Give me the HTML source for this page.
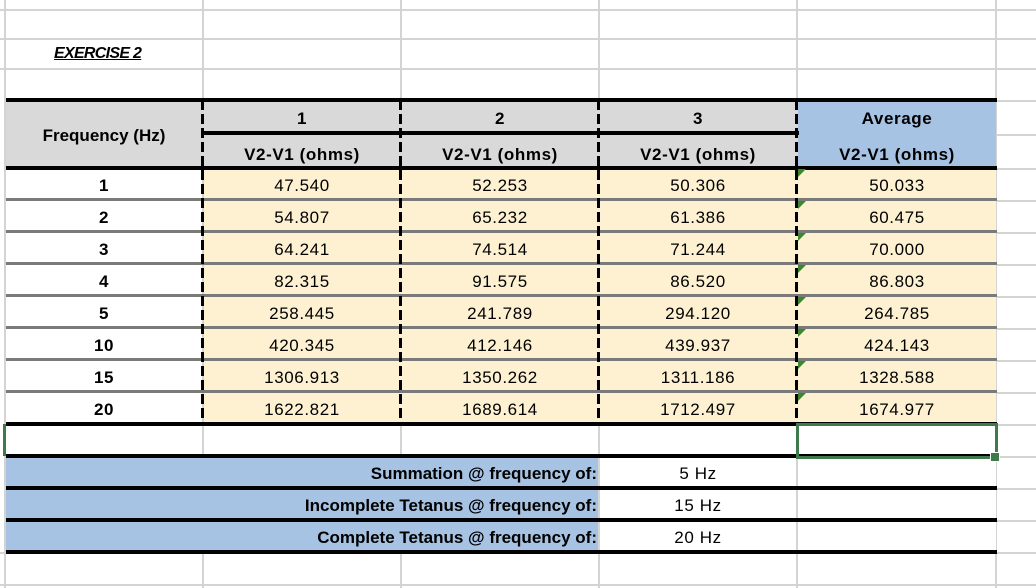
<!DOCTYPE html>
<html><head><style>
body{margin:0;width:1036px;height:588px;overflow:hidden;background:#fff;font-family:"Liberation Sans",sans-serif;position:relative}
div{position:absolute;box-sizing:border-box}
.g{background:#d4d4d4}
.t{text-align:center;font-size:17px;line-height:32px;color:#000;letter-spacing:0.6px}
.b{font-weight:bold}
.hl{background:#7a7a7a;height:3px}
.bl{background:#000;height:4px}
.dash{width:3px;background:repeating-linear-gradient(#000 0 10px,transparent 10px 14px)}
.tri{width:0;height:0;border-top:8px solid #3a8a2a;border-right:8px solid transparent}
</style></head><body>
<div class="g" style="left:0;top:9px;width:1036px;height:2px"></div>
<div class="g" style="left:0;top:38px;width:1036px;height:2px"></div>
<div class="g" style="left:0;top:68px;width:1036px;height:2px"></div>
<div class="g" style="left:0;top:552px;width:1036px;height:2px"></div>
<div class="g" style="left:0;top:584px;width:1036px;height:2px"></div>
<div class="g" style="left:996px;top:456px;width:40px;height:2px"></div>
<div class="g" style="left:4px;top:0;width:2px;height:588px"></div>
<div class="g" style="left:202px;top:0;width:2px;height:588px"></div>
<div class="g" style="left:400px;top:0;width:2px;height:588px"></div>
<div class="g" style="left:598px;top:0;width:2px;height:588px"></div>
<div class="g" style="left:796px;top:0;width:2px;height:588px"></div>
<div class="g" style="left:995px;top:0;width:2px;height:588px"></div>
<div class="g" style="left:997px;top:100px;width:39px;height:2px"></div>
<div class="g" style="left:997px;top:134px;width:39px;height:2px"></div>
<div class="g" style="left:997px;top:168px;width:39px;height:2px"></div>
<div class="g" style="left:997px;top:200px;width:39px;height:2px"></div>
<div class="g" style="left:997px;top:232px;width:39px;height:2px"></div>
<div class="g" style="left:997px;top:264px;width:39px;height:2px"></div>
<div class="g" style="left:997px;top:296px;width:39px;height:2px"></div>
<div class="g" style="left:997px;top:328px;width:39px;height:2px"></div>
<div class="g" style="left:997px;top:360px;width:39px;height:2px"></div>
<div class="g" style="left:997px;top:392px;width:39px;height:2px"></div>
<div class="g" style="left:997px;top:424px;width:39px;height:2px"></div>
<div class="g" style="left:997px;top:488px;width:39px;height:2px"></div>
<div class="g" style="left:997px;top:520px;width:39px;height:2px"></div>

<div class="b" style="left:54px;top:45px;font-size:16px;font-style:italic;text-decoration:underline;letter-spacing:-0.7px">EXERCISE 2</div>

<div style="left:6px;top:100px;width:990px;height:68px;background:#d9d9d9"></div>
<div style="left:6px;top:168px;width:196px;height:324px;background:#fff"></div>
<div style="left:204px;top:168px;width:792px;height:256px;background:#fdf1d2"></div>
<div style="left:798px;top:100px;width:198px;height:68px;background:#a6c3e3"></div>
<div style="left:6px;top:456px;width:593px;height:96px;background:#a6c3e3"></div>
<div style="left:6px;top:424px;width:990px;height:32px;background:#fff"></div>
<div style="left:600px;top:456px;width:396px;height:96px;background:#fff"></div>
<div class="g" style="left:202px;top:424px;width:2px;height:32px"></div>
<div class="g" style="left:400px;top:424px;width:2px;height:32px"></div>
<div class="g" style="left:598px;top:424px;width:2px;height:32px"></div>
<div class="g" style="left:598px;top:456px;width:2px;height:96px"></div>
<div class="g" style="left:796px;top:456px;width:2px;height:96px"></div>

<div class="bl" style="left:6px;top:98px;width:991px"></div>
<div class="bl" style="left:202px;top:131px;width:597px"></div>
<div class="bl" style="left:6px;top:166px;width:991px"></div>
<div class="hl" style="left:6px;top:198px;width:991px"></div>
<div class="hl" style="left:6px;top:230px;width:991px"></div>
<div class="hl" style="left:6px;top:262px;width:991px"></div>
<div class="hl" style="left:6px;top:294px;width:991px"></div>
<div class="hl" style="left:6px;top:326px;width:991px"></div>
<div class="hl" style="left:6px;top:358px;width:991px"></div>
<div class="hl" style="left:6px;top:390px;width:991px"></div>
<div class="bl" style="left:6px;top:422px;width:991px"></div>
<div class="bl" style="left:6px;top:454px;width:991px"></div>
<div class="bl" style="left:6px;top:486px;width:991px"></div>
<div class="bl" style="left:6px;top:518px;width:991px"></div>
<div class="bl" style="left:6px;top:550px;width:991px"></div>
<div class="dash" style="left:201px;top:100px;height:324px"></div>
<div class="dash" style="left:399px;top:100px;height:324px"></div>
<div class="dash" style="left:597px;top:100px;height:324px"></div>
<div class="dash" style="left:795px;top:100px;height:324px"></div>

<div class="t b" style="left:6px;top:120px;width:196px;letter-spacing:0">Frequency (Hz)</div>
<div class="t b" style="left:204px;top:103px;width:196px">1</div>
<div class="t b" style="left:402px;top:103px;width:196px">2</div>
<div class="t b" style="left:600px;top:103px;width:196px">3</div>
<div class="t b" style="left:798px;top:103px;width:198px">Average</div>
<div class="t b" style="left:204px;top:139px;width:196px">V2-V1 (ohms)</div>
<div class="t b" style="left:402px;top:139px;width:196px">V2-V1 (ohms)</div>
<div class="t b" style="left:600px;top:139px;width:196px">V2-V1 (ohms)</div>
<div class="t b" style="left:798px;top:139px;width:198px">V2-V1 (ohms)</div>

<div class="t b" style="left:6px;top:170px;width:196px">1</div>
<div class="t" style="left:204px;top:170px;width:196px">47.540</div><div class="t" style="left:402px;top:170px;width:196px">52.253</div><div class="t" style="left:600px;top:170px;width:196px">50.306</div><div class="t" style="left:798px;top:170px;width:198px">50.033</div>
<div class="t b" style="left:6px;top:202px;width:196px">2</div>
<div class="t" style="left:204px;top:202px;width:196px">54.807</div><div class="t" style="left:402px;top:202px;width:196px">65.232</div><div class="t" style="left:600px;top:202px;width:196px">61.386</div><div class="t" style="left:798px;top:202px;width:198px">60.475</div>
<div class="t b" style="left:6px;top:234px;width:196px">3</div>
<div class="t" style="left:204px;top:234px;width:196px">64.241</div><div class="t" style="left:402px;top:234px;width:196px">74.514</div><div class="t" style="left:600px;top:234px;width:196px">71.244</div><div class="t" style="left:798px;top:234px;width:198px">70.000</div>
<div class="t b" style="left:6px;top:266px;width:196px">4</div>
<div class="t" style="left:204px;top:266px;width:196px">82.315</div><div class="t" style="left:402px;top:266px;width:196px">91.575</div><div class="t" style="left:600px;top:266px;width:196px">86.520</div><div class="t" style="left:798px;top:266px;width:198px">86.803</div>
<div class="t b" style="left:6px;top:298px;width:196px">5</div>
<div class="t" style="left:204px;top:298px;width:196px">258.445</div><div class="t" style="left:402px;top:298px;width:196px">241.789</div><div class="t" style="left:600px;top:298px;width:196px">294.120</div><div class="t" style="left:798px;top:298px;width:198px">264.785</div>
<div class="t b" style="left:6px;top:330px;width:196px">10</div>
<div class="t" style="left:204px;top:330px;width:196px">420.345</div><div class="t" style="left:402px;top:330px;width:196px">412.146</div><div class="t" style="left:600px;top:330px;width:196px">439.937</div><div class="t" style="left:798px;top:330px;width:198px">424.143</div>
<div class="t b" style="left:6px;top:362px;width:196px">15</div>
<div class="t" style="left:204px;top:362px;width:196px">1306.913</div><div class="t" style="left:402px;top:362px;width:196px">1350.262</div><div class="t" style="left:600px;top:362px;width:196px">1311.186</div><div class="t" style="left:798px;top:362px;width:198px">1328.588</div>
<div class="t b" style="left:6px;top:394px;width:196px">20</div>
<div class="t" style="left:204px;top:394px;width:196px">1622.821</div><div class="t" style="left:402px;top:394px;width:196px">1689.614</div><div class="t" style="left:600px;top:394px;width:196px">1712.497</div><div class="t" style="left:798px;top:394px;width:198px">1674.977</div>

<div class="tri" style="left:798px;top:169px"></div>
<div class="tri" style="left:798px;top:201px"></div>
<div class="tri" style="left:798px;top:233px"></div>
<div class="tri" style="left:798px;top:265px"></div>
<div class="tri" style="left:798px;top:297px"></div>
<div class="tri" style="left:798px;top:329px"></div>
<div class="tri" style="left:798px;top:361px"></div>
<div class="tri" style="left:798px;top:393px"></div>

<div class="t b" style="left:6px;top:458px;width:591px;text-align:right;letter-spacing:0">Summation @ frequency of:</div>
<div class="t b" style="left:6px;top:490px;width:591px;text-align:right;letter-spacing:0">Incomplete Tetanus @ frequency of:</div>
<div class="t b" style="left:6px;top:522px;width:591px;text-align:right;letter-spacing:0">Complete Tetanus @ frequency of:</div>
<div class="t" style="left:600px;top:458px;width:196px">5 Hz</div>
<div class="t" style="left:600px;top:490px;width:196px">15 Hz</div>
<div class="t" style="left:600px;top:522px;width:196px">20 Hz</div>

<div style="left:796px;top:423px;width:202px;height:36px;border:3px solid #3f7a4c"></div>
<div style="left:990px;top:452px;width:10px;height:10px;background:#3f7a4c;border:1px solid #fff"></div>
<div style="left:3px;top:424px;width:3px;height:32px;background:#3f7a4c"></div>
</body></html>
